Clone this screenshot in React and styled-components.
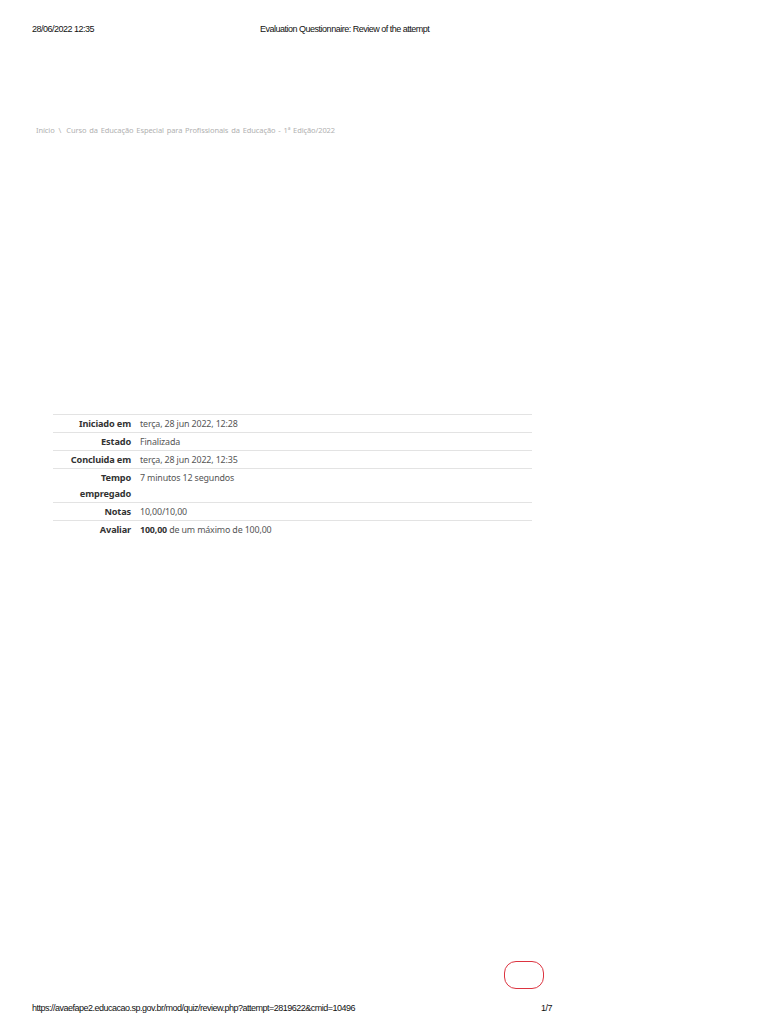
import React from "react";
import styled, { createGlobalStyle } from "styled-components";

const Global = createGlobalStyle`
  html, body { margin: 0; padding: 0; background: #fff; }
  body { font-family: "Liberation Sans", Arial, sans-serif; }
`;

const Page = styled.div`
  width: 768px;
  height: 1024px;
  display: flex;
  flex-direction: column;
  background: #fff;
  overflow: hidden;
`;

const PrintBar = styled.div`
  display: flex;
  align-items: center;
  justify-content: space-between;
  width: 520px;
  padding-left: 32px;
  font-family: "Liberation Sans", Arial, sans-serif;
  font-size: 9px;
  color: #111;
  letter-spacing: -0.5px;
  margin-top: ${(p) => p.$top || 0}px;
  margin-bottom: ${(p) => p.$bottom || 0}px;
`;

const HeadTitle = styled.span`
  margin-left: 166px;
  margin-right: auto;
`;

const Crumbs = styled.div`
  margin: 91px 0 0 36px;
  font-family: "Noto Sans", sans-serif;
  font-size: 7.5px;
  color: #b0b0b0;
  letter-spacing: -0.1px;
  word-spacing: 1px;
`;

const Sep = styled.span`
  margin: 0 5px 0 4px;
`;

const Summary = styled.table`
  margin: 279px 0 0 53px;
  width: 479px;
  table-layout: fixed;
  border-collapse: collapse;
  font-family: "Noto Sans", sans-serif;
  border-top: 1px solid #e3e3e3;
`;

const Row = styled.tr`
  border-bottom: ${(p) => (p.$last ? "none" : "1px solid #e3e3e3")};
`;

const Label = styled.th`
  width: 78px;
  padding: 1px 9px 0 0;
  text-align: right;
  vertical-align: top;
  font-size: 9.2px;
  letter-spacing: -0.15px;
  font-weight: 700;
  color: #333;
  line-height: 16px;
`;

const Value = styled.td`
  padding: 1px 0 0 0;
  vertical-align: top;
  font-size: 8.9px;
  letter-spacing: -0.15px;
  color: #555;
  line-height: 16px;
  b { color: #333; font-weight: 700; }
`;

const Spacer = styled.div`
  flex: 1;
`;

const MarkRow = styled.div`
  padding-left: 504px;
  margin-bottom: 14px;
`;

const Mark = styled.div`
  width: 38px;
  height: 26px;
  border: 1.5px solid #dc3440;
  border-radius: 12px;
`;

const rows = [
  ["Iniciado em", "terça, 28 jun 2022, 12:28"],
  ["Estado", "Finalizada"],
  ["Concluida em", "terça, 28 jun 2022, 12:35"],
  ["Tempo empregado", "7 minutos 12 segundos"],
  ["Notas", "10,00/10,00"],
];

export default function App() {
  return (
    <Page>
      <Global />
      <PrintBar $top={24}>
        <span>28/06/2022 12:35</span>
        <HeadTitle>Evaluation Questionnaire: Review of the attempt</HeadTitle>
      </PrintBar>
      <Crumbs>
        Início<Sep>\</Sep>Curso da Educação Especial para Profissionais da Educação - 1ª Edição/2022
      </Crumbs>
      <Summary>
        <tbody>
          {rows.map(([k, v]) => (
            <Row key={k}>
              <Label>{k}</Label>
              <Value>{v}</Value>
            </Row>
          ))}
          <Row $last>
            <Label>Avaliar</Label>
            <Value>
              <b>100,00</b> de um máximo de 100,00
            </Value>
          </Row>
        </tbody>
      </Summary>
      <Spacer />
      <MarkRow>
        <Mark />
      </MarkRow>
      <PrintBar $bottom={11}>
        <span>https://avaefape2.educacao.sp.gov.br/mod/quiz/review.php?attempt=2819622&amp;cmid=10496</span>
        <span>1/7</span>
      </PrintBar>
    </Page>
  );
}
